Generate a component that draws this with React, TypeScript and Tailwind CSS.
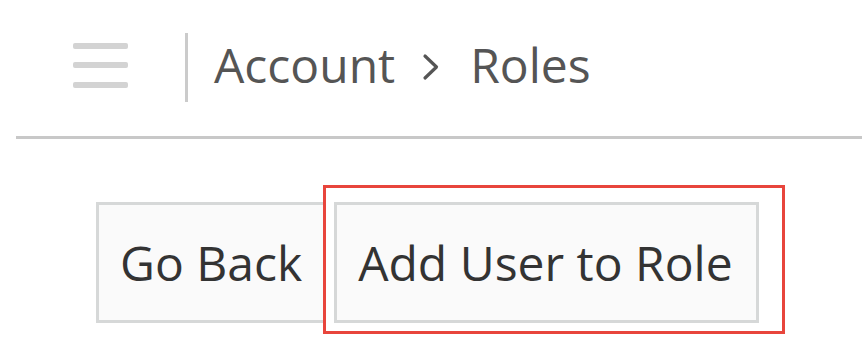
export default function App() {
    return (
        <div className="w-[862px] h-[354px] overflow-hidden bg-white font-['Open_Sans',sans-serif]">
            {/* top bar */}
            <div className="flex h-[130px] items-center pl-[73px]">
                <div className="flex w-[55px] flex-col gap-[13.5px]">
                    <span className="block h-[6px] rounded-[2px] bg-[#d3d3d3]" />
                    <span className="block h-[6px] rounded-[2px] bg-[#d3d3d3]" />
                    <span className="block h-[6px] rounded-[2px] bg-[#d3d3d3]" />
                </div>
                <div className="ml-[57px] mt-[5px] h-[69px] w-[3px] bg-[#cbcbcb]" />
                <div className="ml-[26px] flex items-center text-[48px] leading-[72px] text-[#555555]">
                    <span>Account</span>
                    <svg className="ml-[27px] mr-[31px] mt-[4px]" width="17" height="28" viewBox="0 0 17 28" fill="none">
                        <path d="M3 3 L14.5 14 L3 25" stroke="#555555" strokeWidth="3.2" strokeLinecap="round" strokeLinejoin="round" />
                    </svg>
                    <span>Roles</span>
                </div>
            </div>
            <div className="ml-[16px] mt-[6px] h-[3px] bg-[#c8c8c8]" />

            {/* actions */}
            <div className="mt-[63px] flex gap-[8px] pl-[96px]">
                <button className="border-[3px] border-[#d6d8d8] bg-[#fafafa] px-[21px] py-[21px] text-[48px] leading-[73px] text-[#333333]">
                    Go Back
                </button>
                <div className="relative">
                    <button className="border-[3px] border-[#d6d8d8] bg-[#fafafa] pl-[21px] pr-[23px] py-[21px] text-[48px] leading-[73px] text-[#333333]">
                        Add User to Role
                    </button>
                    <div className="pointer-events-none absolute -left-[11px] -top-[17px] -right-[26px] -bottom-[11px] border-[3px] border-[#e8453c]" />
                </div>
            </div>
        </div>
    );
}
